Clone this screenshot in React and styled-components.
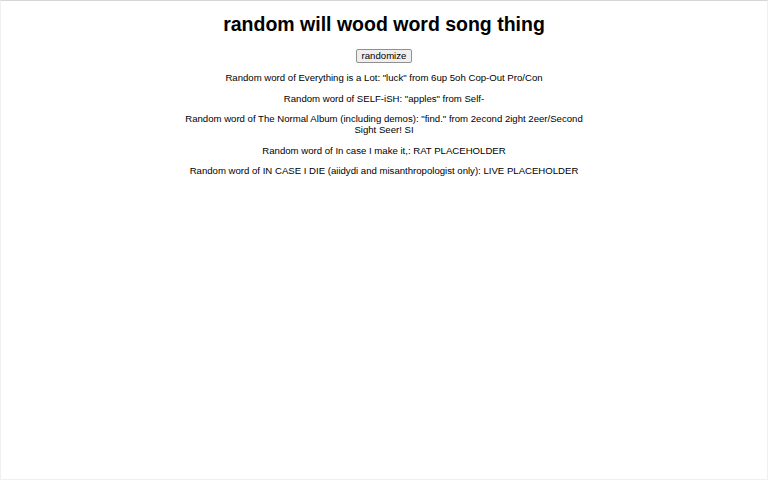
import React from "react";
import styled, { createGlobalStyle } from "styled-components";

const Global = createGlobalStyle`
  html, body { margin: 0; padding: 0; background: #fff; }
  body { font-family: "Liberation Sans", Arial, sans-serif; color: #000; }
`;

const Page = styled.main`
  box-sizing: border-box;
  width: 768px;
  height: 480px;
  border-top: 1px solid #d6d6d6;
  border-left: 1px solid #f0f0f0;
  border-right: 1px solid #f0f0f0;
  border-bottom: 1px solid #f0f0f0;
  display: flex;
  flex-direction: column;
  align-items: center;
  padding-top: 12px;
`;

const Title = styled.h1`
  margin: 0 0 13px;
  font-size: 19.5px;
  line-height: 23px;
  font-weight: bold;
`;

const Button = styled.button`
  font-family: "Liberation Sans", Arial, sans-serif;
  font-size: 9.6px;
  padding: 1px 5px;
  height: 14px;
  line-height: 10px;
  border: 1px solid #8f8f8f;
  border-radius: 2px;
  background: #efefef;
  color: #000;
  margin-bottom: 9px;
`;

const List = styled.section`
  width: 400px;
  display: flex;
  flex-direction: column;
  gap: 9.5px;
`;

const Line = styled.p`
  margin: 0;
  text-align: center;
  font-size: 9.6px;
  line-height: 11px;
`;

const rows = [
  'Random word of Everything is a Lot: "luck" from 6up 5oh Cop-Out Pro/Con',
  'Random word of SELF-iSH: "apples" from Self-',
  'Random word of The Normal Album (including demos): "find." from 2econd 2ight 2eer/Second Sight Seer! SI',
  "Random word of In case I make it,: RAT PLACEHOLDER",
  "Random word of IN CASE I DIE (aiidydi and misanthropologist only): LIVE PLACEHOLDER",
];

export default function App() {
  return (
    <>
      <Global />
      <Page>
        <Title>random will wood word song thing</Title>
        <Button>randomize</Button>
        <List>
          {rows.map((r) => (
            <Line key={r}>{r}</Line>
          ))}
        </List>
      </Page>
    </>
  );
}
